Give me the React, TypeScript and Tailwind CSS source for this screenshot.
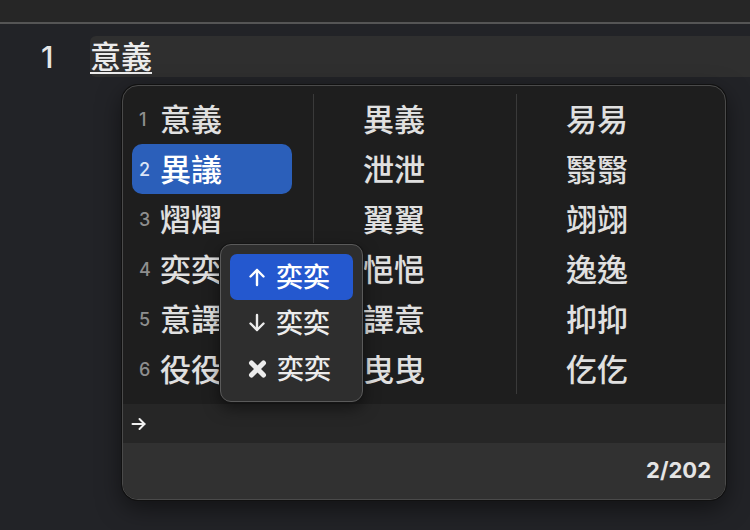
import React from "react";

const FONT = { fontFamily: 'Inter, "Noto Sans CJK TC", "Noto Sans CJK SC", sans-serif' };

const cols: string[][] = [
  ["意義", "異議", "熠熠", "奕奕", "意譯", "役役"],
  ["異義", "泄泄", "翼翼", "悒悒", "譯意", "曳曳"],
  ["易易", "翳翳", "翊翊", "逸逸", "抑抑", "仡仡"],
];

function Column({ items, col }: { items: string[]; col: number }) {
  return (
    <div className="flex w-[160px] flex-col">
      {items.map((t, i) => {
        const active = col === 0 && i === 1;
        return (
          <div
            key={i}
            className={
              active
                ? "flex h-[50px] items-center rounded-[10px] bg-[#2b5fba]"
                : "flex h-[50px] items-center"
            }
          >
            <span
              className={
                active
                  ? "w-[28px] pl-[7px] text-[18px] font-medium text-[#dbe4f5]"
                  : "w-[28px] pl-[7px] text-[18px] font-medium text-[#8e8e8e]"
              }
            >
              {col === 0 ? i + 1 : ""}
            </span>
            <span
              className={
                active
                  ? "text-[31px] leading-none font-medium text-white"
                  : "text-[31px] leading-none font-medium text-[#e0e0e0]"
              }
            >
              {t}
            </span>
          </div>
        );
      })}
    </div>
  );
}

function UpArrow() {
  return (
    <svg width="18" height="20" viewBox="0 0 18 20" fill="none" stroke="#ffffff" strokeWidth="2.4" strokeLinecap="round" strokeLinejoin="round">
      <path d="M9 18V3" />
      <path d="M2.5 9.5L9 3l6.5 6.5" />
    </svg>
  );
}

function DownArrow() {
  return (
    <svg width="18" height="20" viewBox="0 0 18 20" fill="none" stroke="#ececec" strokeWidth="2.4" strokeLinecap="round" strokeLinejoin="round">
      <path d="M9 2v15" />
      <path d="M2.5 10.5L9 17l6.5-6.5" />
    </svg>
  );
}

function HeavyX() {
  return (
    <svg width="19" height="20" viewBox="0 0 19 20" fill="none" stroke="#ececec" strokeWidth="5" strokeLinecap="round">
      <path d="M3.5 4l12 12" />
      <path d="M15.5 4l-12 12" />
    </svg>
  );
}

export default function App() {
  return (
    <div className="relative h-[530px] w-[750px] overflow-hidden bg-[#222327]" style={FONT}>
      {/* top bar */}
      <div className="h-[22px] bg-[#262626]" />
      <div className="h-[2px] bg-[#555555]" />
      {/* editor line */}
      <div className="mt-[12px] flex h-[41px] items-center">
        <div className="w-[90px] pl-[41px] text-[30px] font-medium leading-none text-[#e6e6e6]">1</div>
        <div className="flex h-full flex-1 items-center rounded-l-[6px] bg-[#2f2f2f]">
          <span className="text-[31px] font-medium leading-none text-[#ececec] underline decoration-[1.5px] underline-offset-[4px]">
            意義
          </span>
        </div>
      </div>

      {/* candidate panel */}
      <div className="absolute left-[122px] top-[85px] flex h-[415px] w-[604px] flex-col overflow-hidden rounded-[16px] border border-[#4a4a4a] bg-[#1e1e1e] shadow-[0_0_0_1px_#111,0_8px_24px_rgba(0,0,0,0.5)]">
        <div className="flex pl-[9px] pt-[8px]">
          <Column items={cols[0]} col={0} />
          <div className="mx-[21px] w-px bg-[#3a3a3a]" />
          <Column items={cols[1]} col={1} />
          <div className="mx-[21px] w-px bg-[#3a3a3a]" />
          <Column items={cols[2]} col={2} />
        </div>
        <div className="mt-[10px] flex h-[39px] items-center bg-[#262626] pl-[8px]">
          <svg width="16" height="14" viewBox="0 0 16 14" fill="none" stroke="#f0f0f0" strokeWidth="2" strokeLinecap="round" strokeLinejoin="round">
            <path d="M1.5 7h12" />
            <path d="M8.5 2l5 5-5 5" />
          </svg>
        </div>
        <div className="flex flex-1 items-center justify-end bg-[#313131] pb-[3px] pr-[14px]">
          <span className="text-[22px] font-bold leading-none text-[#e4e4e4]">2/202</span>
        </div>
      </div>

      {/* context menu */}
      <div className="absolute left-[220px] top-[244px] flex w-[143px] flex-col rounded-[11px] border border-[#5a5a5a] bg-[#2e2e2e] p-[9px] shadow-[0_0_0_1px_#151515,0_6px_16px_rgba(0,0,0,0.5)]">
        <div className="flex h-[46px] items-center gap-[10px] rounded-[7px] bg-[#2458cf] pl-[18px]">
          <UpArrow />
          <span className="text-[27px] font-medium leading-none text-white">奕奕</span>
        </div>
        <div className="flex h-[46px] items-center gap-[10px] pl-[18px]">
          <DownArrow />
          <span className="text-[27px] font-medium leading-none text-[#ececec]">奕奕</span>
        </div>
        <div className="flex h-[46px] items-center gap-[10px] pl-[18px]">
          <HeavyX />
          <span className="text-[27px] font-medium leading-none text-[#ececec]">奕奕</span>
        </div>
      </div>
    </div>
  );
}
